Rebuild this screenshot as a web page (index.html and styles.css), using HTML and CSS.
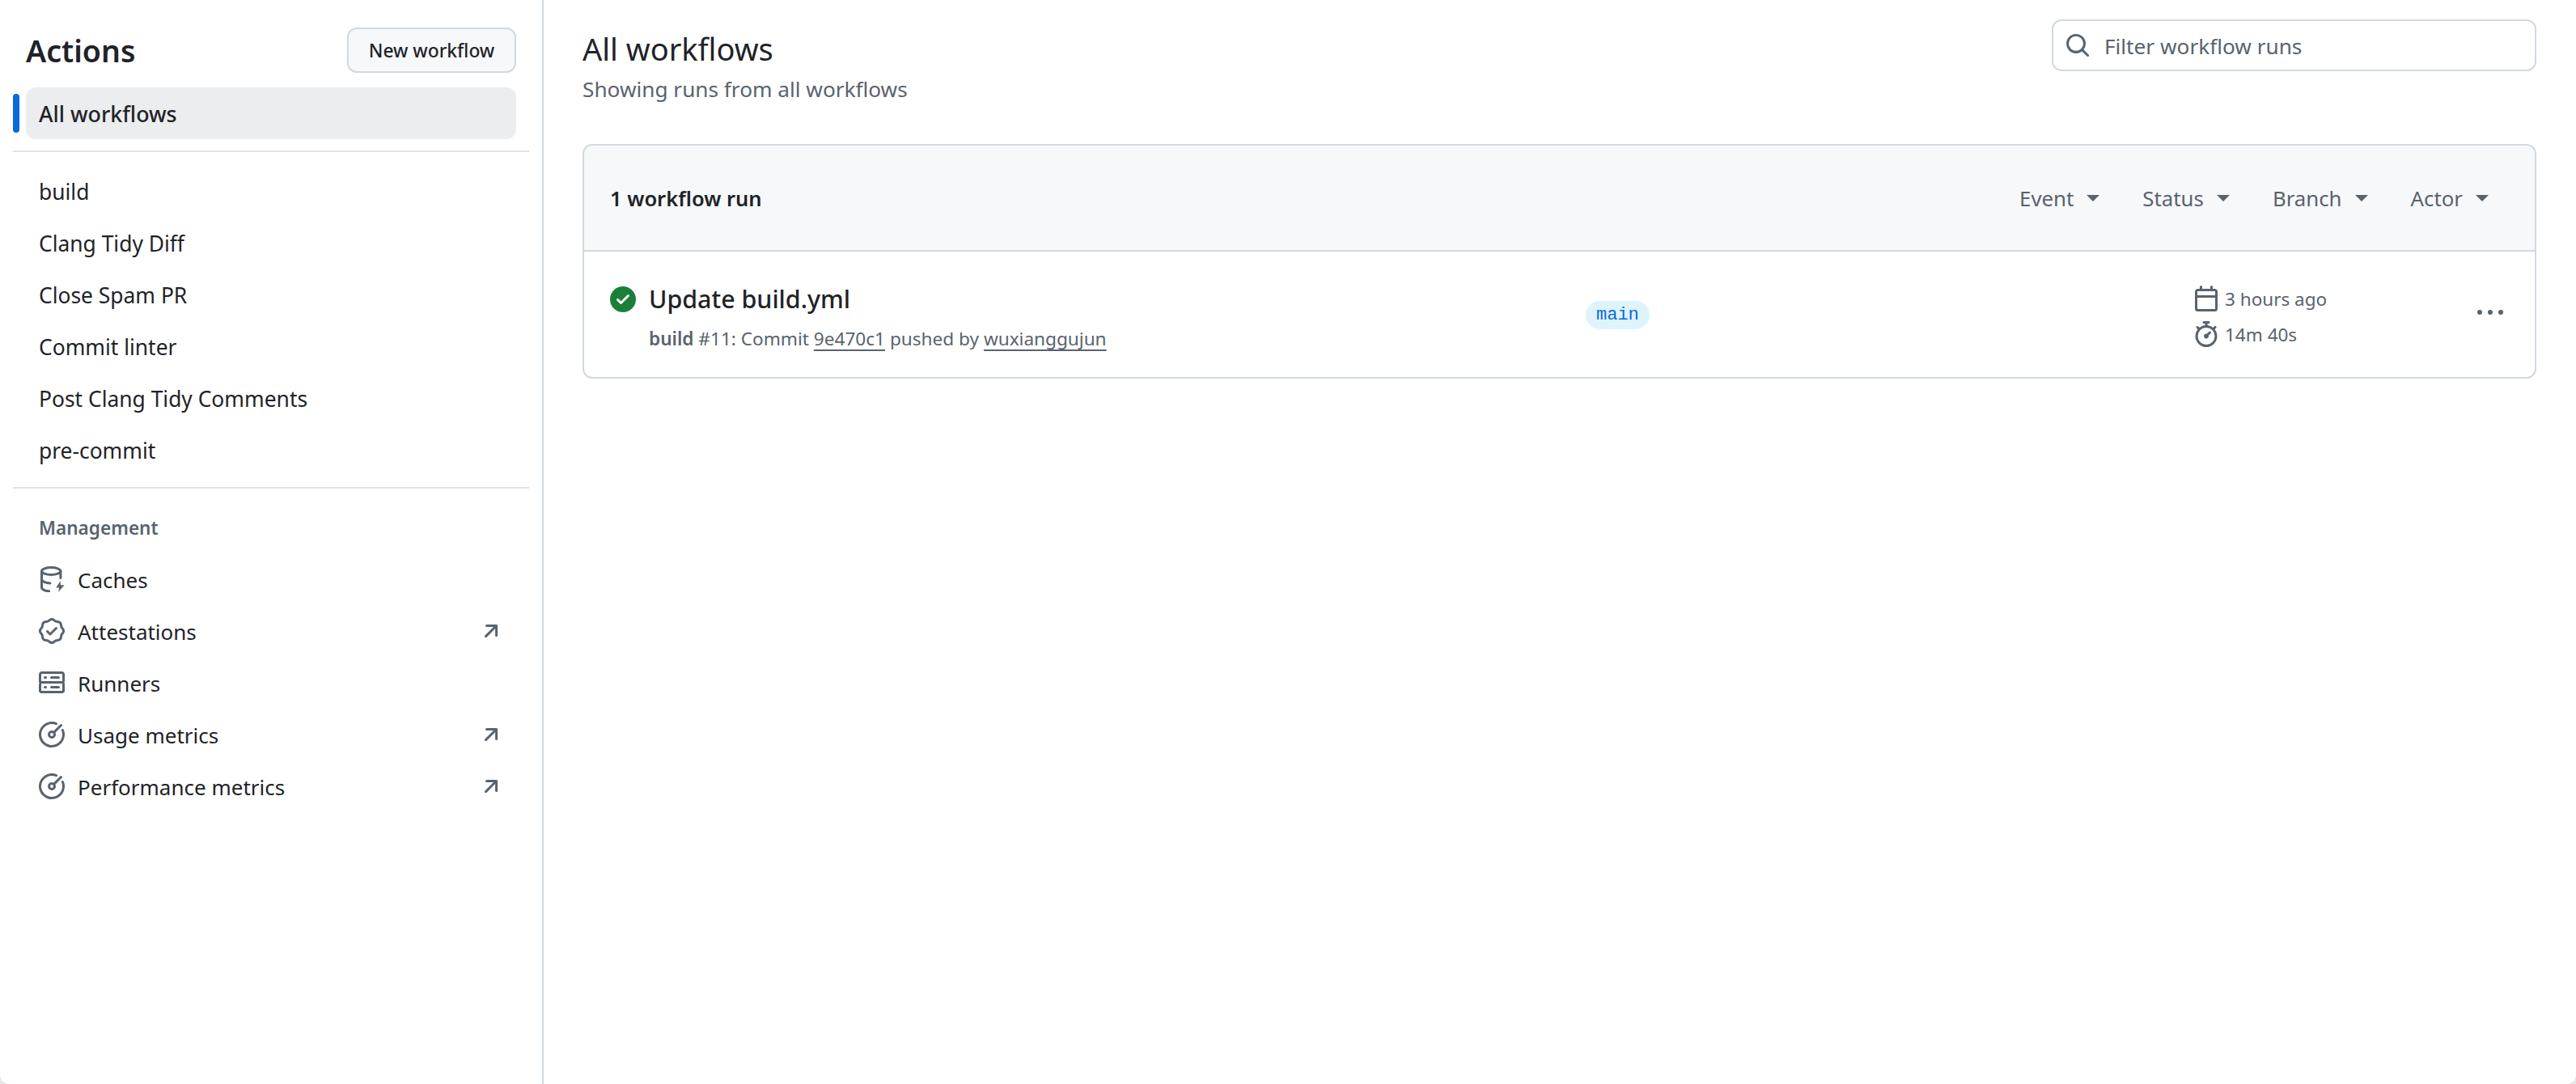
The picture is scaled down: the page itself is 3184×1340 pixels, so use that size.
FILE: index.html
```html
<!DOCTYPE html>
<html lang="en">
<head>
<meta charset="utf-8">
<title>Actions · All workflows</title>
<link rel="stylesheet" href="styles.css">
</head>
<body>
<div class="app">
  <aside class="sidebar">
    <div class="side-head">
      <h2 class="side-title">Actions</h2>
      <button class="new-btn" type="button">New workflow</button>
    </div>
    <a class="item active">All workflows</a>
    <hr class="divider first">
    <ul class="list">
      <li class="item">build</li>
      <li class="item">Clang Tidy Diff</li>
      <li class="item">Close Spam PR</li>
      <li class="item">Commit linter</li>
      <li class="item">Post Clang Tidy Comments</li>
      <li class="item">pre-commit</li>
    </ul>
    <hr class="divider second">
    <div class="group-label">Management</div>
    <ul class="list">
      <li class="item with-icon">
        <svg class="icon" viewBox="0 0 16 16" fill="none" stroke="#59636e" stroke-width="1.5" stroke-linecap="round"><ellipse cx="7.6" cy="3" rx="5.85" ry="2.25"/><path d="M1.75 3v10c0 1.4 2.3 2.3 4.6 2.4M13.45 3v4.2M1.75 8c0 1.4 2.5 2.4 5.2 2.5"/><path d="M13.4 9 10.6 13.2h2l-.6 2.8 3.8-4.4h-2.4z" fill="#59636e" stroke="none"/></svg>
        <span>Caches</span>
      </li>
      <li class="item with-icon">
        <svg class="icon" viewBox="0 0 16 16" fill="#59636e"><path d="m9.585.52.929.68c.153.112.331.186.518.215l1.138.175a2.678 2.678 0 0 1 2.24 2.24l.174 1.139c.029.187.103.365.215.518l.68.928a2.677 2.677 0 0 1 0 3.17l-.68.928a1.174 1.174 0 0 0-.215.518l-.175 1.138a2.678 2.678 0 0 1-2.241 2.241l-1.138.175a1.17 1.17 0 0 0-.518.215l-.928.68a2.677 2.677 0 0 1-3.17 0l-.928-.68a1.174 1.174 0 0 0-.518-.215L3.83 14.41a2.678 2.678 0 0 1-2.24-2.24l-.175-1.138a1.17 1.17 0 0 0-.215-.518l-.68-.928a2.677 2.677 0 0 1 0-3.17l.68-.928c.112-.153.186-.331.215-.518l.175-1.14a2.678 2.678 0 0 1 2.24-2.24l1.139-.175c.187-.029.365-.103.518-.215l.928-.68a2.677 2.677 0 0 1 3.17 0ZM7.303 1.728l-.927.68a2.67 2.67 0 0 1-1.18.489l-1.137.174a1.179 1.179 0 0 0-.987.987l-.174 1.136a2.677 2.677 0 0 1-.489 1.18l-.68.928a1.18 1.18 0 0 0 0 1.394l.68.927c.256.348.424.753.489 1.18l.174 1.137c.078.509.478.909.987.987l1.136.174a2.67 2.67 0 0 1 1.18.489l.928.68c.414.305.979.305 1.394 0l.927-.68a2.67 2.67 0 0 1 1.18-.489l1.137-.174a1.18 1.18 0 0 0 .987-.987l.174-1.136a2.67 2.67 0 0 1 .489-1.18l.68-.928a1.176 1.176 0 0 0 0-1.394l-.68-.927a2.686 2.686 0 0 1-.489-1.18l-.174-1.137a1.179 1.179 0 0 0-.987-.987l-1.136-.174a2.677 2.677 0 0 1-1.18-.489l-.928-.68a1.176 1.176 0 0 0-1.394 0ZM11.28 6.78l-3.75 3.75a.75.75 0 0 1-1.06 0L4.72 8.78a.751.751 0 0 1 .018-1.042.751.751 0 0 1 1.042-.018l1.22 1.22 3.22-3.22a.751.751 0 0 1 1.042.018.751.751 0 0 1 .018 1.042Z"/></svg>
        <span>Attestations</span>
        <svg class="icon ext" viewBox="0 0 16 16" fill="#59636e"><path d="M4.53 4.75A.75.75 0 0 1 5.28 4h6.01a.75.75 0 0 1 .75.75v6.01a.75.75 0 0 1-1.5 0v-4.2l-5.26 5.261a.749.749 0 0 1-1.275-.326.749.749 0 0 1 .215-.734L9.48 5.5h-4.2a.75.75 0 0 1-.75-.75Z"/></svg>
      </li>
      <li class="item with-icon">
        <svg class="icon" viewBox="0 0 16 16" fill="#59636e"><path d="M1.75 1h12.5c.966 0 1.75.784 1.75 1.75v4c0 .372-.116.717-.314 1 .198.283.314.628.314 1v4a1.75 1.75 0 0 1-1.75 1.75H1.75A1.75 1.75 0 0 1 0 13.25v-4c0-.372.116-.717.314-1a1.739 1.739 0 0 1-.314-1v-4C0 1.784.784 1 1.75 1ZM1.5 2.75v4c0 .138.112.25.25.25h12.5a.25.25 0 0 0 .25-.25v-4a.25.25 0 0 0-.25-.25H1.75a.25.25 0 0 0-.25.25Zm.25 5.75a.25.25 0 0 0-.25.25v4c0 .138.112.25.25.25h12.5a.25.25 0 0 0 .25-.25v-4a.25.25 0 0 0-.25-.25ZM7 4.75A.75.75 0 0 1 7.75 4h4.5a.75.75 0 0 1 0 1.5h-4.5A.75.75 0 0 1 7 4.75ZM7.75 10h4.5a.75.75 0 0 1 0 1.5h-4.5a.75.75 0 0 1 0-1.5ZM3 4.75A.75.75 0 0 1 3.75 4h.5a.75.75 0 0 1 0 1.5h-.5A.75.75 0 0 1 3 4.75ZM3.75 10h.5a.75.75 0 0 1 0 1.5h-.5a.75.75 0 0 1 0-1.5Z"/></svg>
        <span>Runners</span>
      </li>
      <li class="item with-icon">
        <svg class="icon" viewBox="0 0 16 16" fill="#59636e"><path d="M8 1.5a6.5 6.5 0 1 0 6.016 4.035.75.75 0 0 1 1.388-.57 8 8 0 1 1-4.37-4.37.75.75 0 0 1-.569 1.389A6.473 6.473 0 0 0 8 1.5Zm6.28.22a.75.75 0 0 1 0 1.06l-4.063 4.064a2.5 2.5 0 1 1-1.06-1.06L13.22 1.72a.75.75 0 0 1 1.06 0ZM7 8a1 1 0 1 0 2 0 1 1 0 0 0-2 0Z"/></svg>
        <span>Usage metrics</span>
        <svg class="icon ext" viewBox="0 0 16 16" fill="#59636e"><path d="M4.53 4.75A.75.75 0 0 1 5.28 4h6.01a.75.75 0 0 1 .75.75v6.01a.75.75 0 0 1-1.5 0v-4.2l-5.26 5.261a.749.749 0 0 1-1.275-.326.749.749 0 0 1 .215-.734L9.48 5.5h-4.2a.75.75 0 0 1-.75-.75Z"/></svg>
      </li>
      <li class="item with-icon">
        <svg class="icon" viewBox="0 0 16 16" fill="#59636e"><path d="M8 1.5a6.5 6.5 0 1 0 6.016 4.035.75.75 0 0 1 1.388-.57 8 8 0 1 1-4.37-4.37.75.75 0 0 1-.569 1.389A6.473 6.473 0 0 0 8 1.5Zm6.28.22a.75.75 0 0 1 0 1.06l-4.063 4.064a2.5 2.5 0 1 1-1.06-1.06L13.22 1.72a.75.75 0 0 1 1.06 0ZM7 8a1 1 0 1 0 2 0 1 1 0 0 0-2 0Z"/></svg>
        <span>Performance metrics</span>
        <svg class="icon ext" viewBox="0 0 16 16" fill="#59636e"><path d="M4.53 4.75A.75.75 0 0 1 5.28 4h6.01a.75.75 0 0 1 .75.75v6.01a.75.75 0 0 1-1.5 0v-4.2l-5.26 5.261a.749.749 0 0 1-1.275-.326.749.749 0 0 1 .215-.734L9.48 5.5h-4.2a.75.75 0 0 1-.75-.75Z"/></svg>
      </li>
    </ul>
  </aside>

  <main class="main">
    <header class="main-head">
      <div class="heading">
        <h1 class="main-title">All workflows</h1>
        <p class="main-sub">Showing runs from all workflows</p>
      </div>
      <label class="filter">
        <svg class="icon" viewBox="0 0 16 16" fill="#59636e"><path d="M10.68 11.74a6 6 0 0 1-7.922-8.982 6 6 0 0 1 8.982 7.922l3.04 3.04a.749.749 0 0 1-.326 1.275.749.749 0 0 1-.734-.215ZM11.5 7a4.499 4.499 0 1 0-8.997 0A4.499 4.499 0 0 0 11.5 7Z"/></svg>
        <span>Filter workflow runs</span>
      </label>
    </header>

    <section class="box">
      <div class="box-head">
        <strong class="count">1 workflow run</strong>
        <div class="menus">
          <span class="menu">Event<i class="caret"></i></span>
          <span class="menu">Status<i class="caret"></i></span>
          <span class="menu">Branch<i class="caret"></i></span>
          <span class="menu">Actor<i class="caret"></i></span>
        </div>
      </div>
      <div class="run">
        <div class="run-main">
          <svg class="icon" viewBox="0 0 16 16" fill="#1a7f37"><path d="M8 16A8 8 0 1 1 8 0a8 8 0 0 1 0 16Zm3.78-9.72a.751.751 0 0 0-.018-1.042.751.751 0 0 0-1.042-.018L6.75 9.19 5.28 7.72a.751.751 0 0 0-1.042.018.751.751 0 0 0-.018 1.042l2 2a.75.75 0 0 0 1.06 0Z"/></svg>
          <div class="run-text">
            <div class="run-title">Update build.yml</div>
            <div class="run-sub"><b>build</b> #11: Commit <a>9e470c1</a> pushed by <a>wuxianggujun</a></div>
          </div>
        </div>
        <div class="run-branch"><code class="branch">main</code></div>
        <div class="run-time">
          <div class="time-line">
            <svg class="icon" viewBox="0 0 16 16" fill="#59636e"><path d="M4.75 0a.75.75 0 0 1 .75.75V2h5V.75a.75.75 0 0 1 1.5 0V2h1.25c.966 0 1.75.784 1.75 1.75v10.5A1.75 1.75 0 0 1 13.25 16H2.75A1.75 1.75 0 0 1 1 14.25V3.75C1 2.784 1.784 2 2.75 2H4V.75A.75.75 0 0 1 4.75 0ZM2.5 7.5v6.75c0 .138.112.25.25.25h10.5a.25.25 0 0 0 .25-.25V7.5Zm10.75-4H2.75a.25.25 0 0 0-.25.25V6h11V3.75a.25.25 0 0 0-.25-.25Z"/></svg>
            <span>3 hours ago</span>
          </div>
          <div class="time-line">
            <svg class="icon" viewBox="0 0 16 16" fill="#59636e"><path d="M5.75.75A.75.75 0 0 1 6.5 0h3a.75.75 0 0 1 0 1.5h-.75v1l-.001.041a6.724 6.724 0 0 1 3.464 1.435l.007-.006.75-.75a.75.75 0 1 1 1.06 1.06l-.75.75-.006.007a6.75 6.75 0 1 1-10.548 0L2.72 5.03l-.75-.75a.75.75 0 0 1 1.06-1.06l.75.75.007.006A6.72 6.72 0 0 1 7.25 2.541V1.5H6.5a.75.75 0 0 1-.75-.75ZM8 14.5a5.25 5.25 0 1 0-.001-10.501A5.25 5.25 0 0 0 8 14.5Zm.389-6.7 1.33-1.33a.75.75 0 1 1 1.061 1.06L9.45 8.861A1.503 1.503 0 0 1 8 10.75a1.499 1.499 0 1 1 .389-2.95Z"/></svg>
            <span>14m 40s</span>
          </div>
        </div>
        <svg class="icon kebab" viewBox="0 0 16 16" fill="#59636e"><path d="M8 9a1.5 1.5 0 1 0 0-3 1.5 1.5 0 0 0 0 3ZM1.5 9a1.5 1.5 0 1 0 0-3 1.5 1.5 0 0 0 0 3Zm13 0a1.5 1.5 0 1 0 0-3 1.5 1.5 0 0 0 0 3Z"/></svg>
      </div>
    </section>
  </main>
</div>
</body>
</html>
```
FILE: styles.css
```css
* { box-sizing: border-box; }
html, body { height: 100%; }
body {
  margin: 0;
  background: #e8e8e8;
  color: #1f2328;
  font-family: "Noto Sans", "Liberation Sans", sans-serif;
  font-size: 26.4px;
}
.app {
  display: flex;
  height: 1340px;
  background: #fff;
  border-radius: 0 0 12px 12px;
  overflow: hidden;
}
.icon { width: 32px; height: 32px; flex: none; display: block; }

/* Sidebar */
.sidebar {
  width: 672px;
  flex: none;
  border-right: 2px solid #d1d9e0;
  padding: 34px 16px 0;
}
.side-head {
  display: flex;
  align-items: center;
  justify-content: space-between;
  padding: 0 0 0 16px;
  height: 56px;
  margin-bottom: 18px;
}
.side-title {
  margin: 0;
  padding-top: 2px;
  font-size: 37.5px;
  font-weight: 600;
  line-height: 56px;
}
.new-btn {
  width: 209px;
  height: 56px;
  margin-right: 16px;
  padding: 0;
  border: 2px solid #d1d9e0;
  border-radius: 12px;
  background: #f6f8fa;
  color: #1f2328;
  font: 500 22.8px "Noto Sans", sans-serif;
}
.item {
  display: flex;
  align-items: center;
  height: 64px;
  margin: 0 16px;
  padding: 0 16px;
  border-radius: 12px;
  font-size: 26.4px;
  list-style: none;
}
.item.active {
  position: relative;
  padding-top: 1px;
  background: #ecedef;
  font-size: 26.8px;
  font-weight: 500;
}
.item.active::before {
  content: "";
  position: absolute;
  left: -16px;
  top: 8px;
  width: 8px;
  height: 48px;
  border-radius: 4px;
  background: #0969da;
}
.divider {
  height: 2px;
  margin: 0;
  border: 0;
  background: #dfe4e9;
}
.divider.first { margin: 14px 0 17px; }
.divider.second { margin: 13px 0 33px; }
.list { margin: 0; padding: 0; }
.group-label {
  margin: 0 32px 15px;
  font-size: 22.6px;
  font-weight: 600;
  line-height: 32px;
  color: #59636e;
}
.with-icon { gap: 16px; font-size: 26px; }
.with-icon span { padding-top: 1px; }
.with-icon .ext { margin-left: auto; margin-right: -1px; }

/* Main */
.main {
  flex: 1;
  min-width: 0;
  padding: 24px 49px 0 48px;
}
.main-head {
  display: flex;
  justify-content: space-between;
  align-items: flex-start;
  height: 154px;
}
.heading { padding-top: 6px; }
.main-title {
  margin: 0;
  font-size: 38px;
  font-weight: 400;
  line-height: 60px;
}
.main-sub {
  margin: 0;
  font-size: 26.2px;
  line-height: 40px;
  color: #59636e;
}
.filter {
  display: flex;
  align-items: center;
  gap: 17px;
  width: 599px;
  height: 64px;
  padding: 0 14px;
  border: 2px solid #d1d9e0;
  border-radius: 12px;
  font-size: 26.2px;
  color: #59636e;
}
.filter span { padding-top: 1px; }
.box {
  border: 2px solid #d1d9e0;
  border-radius: 12px;
  overflow: hidden;
}
.box-head {
  display: flex;
  align-items: center;
  justify-content: space-between;
  height: 131px;
  padding: 0 57px 0 32px;
  background: #f6f8fa;
  border-bottom: 2px solid #d1d9e0;
}
.count { font-weight: 600; font-size: 25.5px; }
.menus { display: flex; gap: 53px; font-size: 25.8px; color: #59636e; }
.menu { display: flex; align-items: center; gap: 16px; }
.caret {
  width: 0;
  height: 0;
  border: 8px solid transparent;
  border-top-color: #59636e;
  border-bottom-width: 0;
}
.run {
  display: grid;
  grid-template-columns: 1206px 751px 351px 32px;
  align-items: center;
  height: 155px;
  padding-left: 32px;
}
.run-main { display: flex; gap: 16px; padding-top: 12px; }
.run-title {
  font-size: 30.4px;
  font-weight: 500;
  line-height: 32px;
  margin-bottom: 17px;
}
.run-sub {
  font-size: 22.6px;
  line-height: 32px;
  color: #59636e;
}
.run-sub b { font-weight: 600; }
.run-sub a {
  text-decoration: underline;
  text-decoration-thickness: 2px;
  text-underline-offset: 5px;
}
.run-branch { padding-bottom: 3px; }
.branch {
  display: inline-block;
  padding: 0 13px;
  height: 35px;
  line-height: 35px;
  border-radius: 18px;
  background: #ddf4ff;
  color: #0969da;
  font-family: "Liberation Mono", monospace;
  font-size: 22px;
}
.run-time {
  display: flex;
  flex-direction: column;
  gap: 10px;
  padding-top: 5px;
  color: #59636e;
  font-size: 22.5px;
}
.time-line { display: flex; align-items: center; gap: 7px; line-height: 32px; }
.time-line span { padding-top: 2px; }
.kebab { margin-top: -3px; }
```
